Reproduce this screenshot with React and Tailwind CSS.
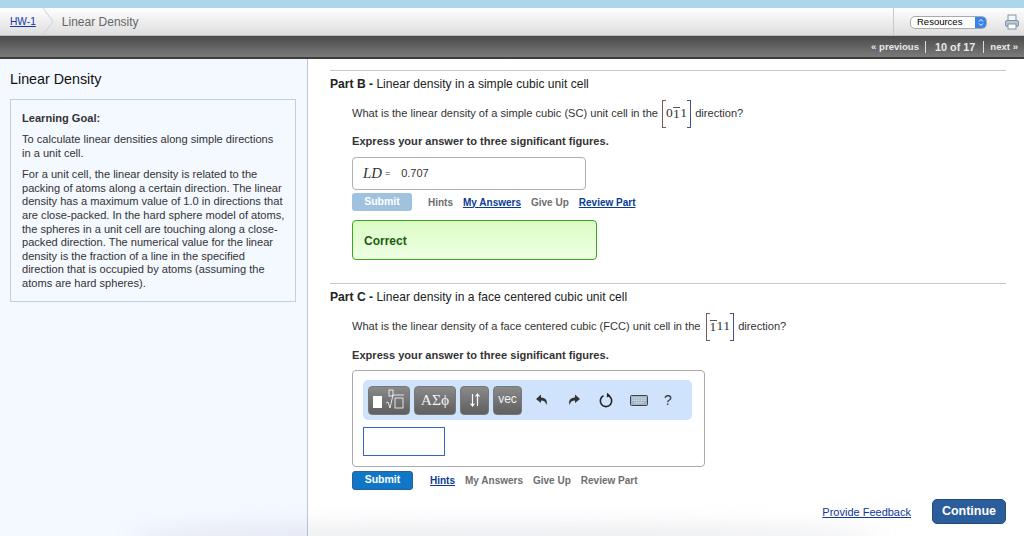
import React from "react";

const Bracket = ({ children, className = "" }) => (
  <span className={`inline-flex items-center h-[28px] mx-[4px] px-[4px] relative font-['Liberation_Serif',serif] text-[13.5px] tracking-[0.3px] text-[#333] ${className}`}>
    <span className="absolute left-0 top-0 bottom-0 w-[4px] border border-r-0 border-[#7b5a5a]" />
    {children}
    <span className="absolute right-0 top-0 bottom-0 w-[4px] border border-l-0 border-[#46508a]" />
  </span>
);

const Bar = ({ children }) => <span className="border-t border-[#555] leading-[12px]">{children}</span>;

const Tool = ({ w, children, className = "" }) => (
  <div className={`h-[29px] rounded-[4px] bg-gradient-to-b from-[#8a8a8a] to-[#5f5f5f] border border-[#777] text-[#f2f2f2] flex items-center justify-center ${w} ${className}`}>
    {children}
  </div>
);

const Links = ({ items, gap = "gap-[10px]" }) => (
  <div className={`flex items-center ${gap} text-[10px] font-bold`}>
    {items.map(([t, link]) => (
      <span key={t} className={link ? "text-[#0b3a94] underline" : "text-[#6e6e6e]"}>{t}</span>
    ))}
  </div>
);

export default function App() {
  return (
    <div className="relative w-[1024px] h-[536px] overflow-hidden bg-white flex flex-col font-['Liberation_Sans',Arial,sans-serif] text-[#333]">
      <div className="h-[8px] shrink-0 bg-[#acd6ec]" />
      <header className="h-[28px] shrink-0 flex items-center bg-gradient-to-b from-white to-[#dedede] border-b border-[#bdbdbd]">
        <a className="ml-[10px] pt-[1px] text-[10.2px] text-[#1238a8] underline">HW-1</a>
        <svg width="14" height="27" viewBox="0 0 14 27" className="ml-[6px]"><path d="M1 0 L11 13.5 L1 27" fill="none" stroke="#d0d0d0" /></svg>
        <span className="ml-[6px] pt-[1px] text-[12px] text-[#666]">Linear Density</span>
        <div className="ml-auto h-full w-[131px] border-l border-[#c8c8c8] flex items-center pl-[16px] pt-[1px]">
          <div className="w-[77px] h-[13px] rounded-[5px] border border-[#aaa] bg-white flex items-center overflow-hidden text-[9.5px] text-black">
            <span className="flex-1 pl-[6px]">Resources</span>
            <span className="w-[11px] h-full bg-[#3b82e6] text-white flex flex-col items-center justify-center">
              <svg width="6" height="9" viewBox="0 0 6 9"><path d="M1 3.5 L3 1.5 L5 3.5 M1 5.5 L3 7.5 L5 5.5" fill="none" stroke="#fff" /></svg>
            </span>
          </div>
          <svg width="16" height="16" viewBox="0 0 16 16" className="ml-[17px]">
            <rect x="4" y="1" width="8" height="6" fill="#f4f8fc" stroke="#7f93a8" />
            <rect x="1.5" y="6.5" width="13" height="6" rx="1.5" fill="#b9c6d4" stroke="#7f93a8" />
            <rect x="4" y="10" width="8" height="5" fill="#fff" stroke="#7f93a8" />
          </svg>
        </div>
      </header>
      <nav className="h-[23px] shrink-0 flex items-center justify-end pr-[6px] pt-[1px] bg-gradient-to-b from-[#4b4b4b] to-[#7a7a7a] border-b-[2px] border-[#3d3d3d] text-[9.6px] font-bold text-[#e9e9e9]">
        <span>« previous</span>
        <span className="w-px h-[12px] bg-[#ddd] ml-[6px] mr-[9px]" />
        <span className="text-[10.8px]">10 of 17</span>
        <span className="w-px h-[12px] bg-[#ddd] ml-[8px] mr-[6px]" />
        <span>next »</span>
      </nav>
      <main className="flex-1 flex min-h-0">
        <aside className="w-[308px] shrink-0 bg-[#f4f8ff] border-r border-[#b5c6d6] pl-[10px] pr-[11px] pt-[11px]">
          <h1 className="text-[14.3px] leading-[18px] text-[#111]">Linear Density</h1>
          <section className="mt-[11px] h-[203px] border border-[#bdd0e0] pl-[11px] pr-[8px] pt-[11px] text-[11.08px] leading-[13.6px] text-[#333]">
            <h2 className="font-bold leading-[14px]">Learning Goal:</h2>
            <p className="mt-[8px]">To calculate linear densities along simple directions<br />in a unit cell.</p>
            <p className="mt-[8px]">
              For a unit cell, the linear density is related to the<br />
              packing of atoms along a certain direction. The linear<br />
              density has a maximum value of 1.0 in directions that<br />
              are close-packed. In the hard sphere model of atoms,<br />
              the spheres in a unit cell are touching along a close-<br />
              packed direction. The numerical value for the linear<br />
              density is the fraction of a line in the specified<br />
              direction that is occupied by atoms (assuming the<br />
              atoms are hard spheres).
            </p>
          </section>
        </aside>
        <div className="flex-1 pl-[22px] pr-[18px] pt-[11px] min-w-0">
          <div className="border-t border-[#c8c8c8] pt-[6px]">
            <h3 className="text-[12.1px] leading-[14px] text-[#222]"><b>Part B - </b>Linear density in a simple cubic unit cell</h3>
            <div className="ml-[22px]">
              <p className="mt-[9px] h-[27px] flex items-center text-[11.08px] text-[#333]">
                <span>What is the linear density of a simple cubic (SC) unit cell in the</span>
                <Bracket>0<Bar>1</Bar>1</Bracket>
                <span>direction?</span>
              </p>
              <p className="mt-[7px] text-[11.08px] leading-[14px] font-bold text-[#333]">Express your answer to three significant figures.</p>
              <div className="mt-[9px] w-[234px] h-[33px] rounded-[4px] border border-[#b0b0b0] flex items-center pl-[10px] text-[11px]">
                <i className="font-['Liberation_Serif',serif] text-[14.8px]">LD</i>
                <span className="ml-[3px] text-[9px]">=</span>
                <span className="ml-[11px]">0.707</span>
              </div>
              <div className="mt-[3px] flex items-center h-[18px]">
                <div className="w-[60px] h-[18px] rounded-[3px] bg-[#a0c2de] text-white text-[10.5px] font-bold flex items-center justify-center">Submit</div>
                <div className="ml-[16px]"><Links items={[["Hints"], ["My Answers", 1], ["Give Up"], ["Review Part", 1]]} /></div>
              </div>
              <div className="mt-[9px] w-[245px] h-[40px] rounded-[4px] border border-[#3aa81e] bg-gradient-to-b from-[#dcfcc4] to-[#eeffe4] flex items-center pl-[11px] pt-[1px] text-[12px] font-bold text-[#1c5c10]">Correct</div>
            </div>
          </div>
          <div className="mt-[23px] border-t border-[#c8c8c8] pt-[6px]">
            <h3 className="text-[12.1px] leading-[14px] text-[#222]"><b>Part C - </b>Linear density in a face centered cubic unit cell</h3>
            <div className="ml-[22px]">
              <p className="mt-[9px] h-[27px] flex items-center text-[11.08px] text-[#333]">
                <span>What is the linear density of a face centered cubic (FCC) unit cell in the</span>
                <Bracket className="ml-[5px]"><Bar>1</Bar>11</Bracket>
                <span>direction?</span>
              </p>
              <p className="mt-[8px] text-[11.08px] leading-[14px] font-bold text-[#333]">Express your answer to three significant figures.</p>
              <div className="mt-[8px] w-[353px] h-[97px] rounded-[4px] border border-[#aaa] pl-[10px] pt-[9px]">
                <div className="w-[329px] h-[40px] rounded-[5px] bg-[#cfe4fc] flex items-center pl-[5px]">
                  <Tool w="w-[42px]" className="gap-[3px]">
                    <span className="w-[9px] h-[12px] bg-white mt-[3px]" />
                    <svg width="20" height="22" viewBox="0 0 20 22"><path d="M1 14 L3 13 L5 19 L8 6 H19" fill="none" stroke="#fff" strokeWidth="0.8" /><rect x="4" y="1" width="4" height="6" fill="none" stroke="#fff" strokeWidth="0.8" /><rect x="10" y="9" width="8" height="10" fill="none" stroke="#fff" strokeWidth="0.8" /></svg>
                  </Tool>
                  <Tool w="w-[42px]" className="ml-[4px] font-['Liberation_Serif',serif] text-[15.5px]">ΑΣϕ</Tool>
                  <Tool w="w-[29px]" className="ml-[4px]">
                    <svg width="14" height="14" viewBox="0 0 14 14"><path d="M4.5 1 V13 M2.5 10.5 L4.5 13 L6.5 10.5 M9.5 13 V1 M7.5 3.5 L9.5 1 L11.5 3.5" fill="none" stroke="#fff" strokeWidth="1.2" /></svg>
                  </Tool>
                  <Tool w="w-[29px]" className="ml-[4px] text-[12px] !items-start pt-[3px]">vec</Tool>
                  <svg width="14" height="14" viewBox="0 0 14 14" className="ml-[13px]"><path d="M6 1.5 L1 6 L6 10 V7.4 C9 7.4 10.8 8.6 11.3 12 C13 8 11 4.5 6 4.4 Z" fill="#333" /></svg>
                  <svg width="14" height="14" viewBox="0 0 14 14" className="ml-[18px]"><path d="M8 1.5 L13 6 L8 10 V7.4 C5 7.4 3.2 8.6 2.7 12 C1 8 3 4.5 8 4.4 Z" fill="#333" /></svg>
                  <svg width="16" height="16" viewBox="0 0 16 16" className="ml-[17px]"><path d="M5.5 3.8 A5.7 5.7 0 1 0 10.5 3.8" fill="none" stroke="#222" strokeWidth="1.6" /><path d="M9 0.8 L12.4 3.6 L8.8 5.6 Z" fill="#222" /></svg>
                  <svg width="18" height="11" viewBox="0 0 18 11" className="ml-[16px]"><rect x="0.5" y="0.5" width="17" height="10" rx="1" fill="#9fb4c8" stroke="#444" /><path d="M2.5 3 H15.5 M2.5 5.2 H15.5 M4.5 7.8 H13.5" stroke="#f2f6fa" strokeWidth="1" strokeDasharray="1 0.7" /></svg>
                  <span className="ml-[16px] text-[14px] text-[#333]">?</span>
                </div>
                <div className="mt-[7px] w-[82px] h-[29px] border border-[#2f66c8] bg-white" />
              </div>
              <div className="mt-[4px] flex items-center h-[18px]">
                <div className="w-[61px] h-[19px] rounded-[3px] bg-[#0f76c8] border border-[#2c5f94] text-white text-[10.5px] font-bold flex items-center justify-center">Submit</div>
                <div className="ml-[17px]"><Links items={[["Hints", 1], ["My Answers"], ["Give Up"], ["Review Part"]]} /></div>
              </div>
              <div className="mt-[10px] flex items-center justify-end">
                <a className="text-[11px] pt-[2px] text-[#12359c] underline">Provide Feedback</a>
                <div className="ml-[21px] w-[74px] h-[25px] rounded-[5px] bg-[#2c5d9b] border border-[#234d82] text-white text-[12.5px] font-bold flex items-center justify-center">Continue</div>
              </div>
            </div>
          </div>
        </div>
      </main>
      <div className="pointer-events-none absolute left-[130px] right-[140px] bottom-[-16px] h-[30px] rounded-[50%] bg-[#8d93a8]/15 blur-[10px]" />
    </div>
  );
}
